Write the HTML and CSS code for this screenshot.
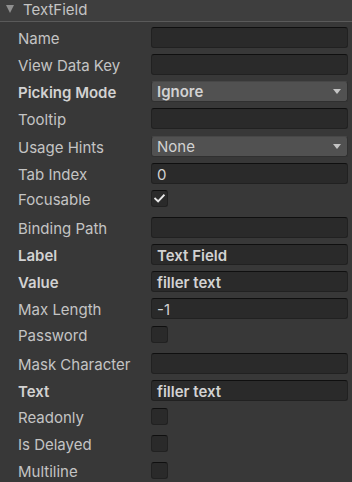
FILE: index.html
```html
<!DOCTYPE html>
<html lang="en">
<head>
    <meta charset="UTF-8">
    <title>TextField Inspector</title>
    <link rel="stylesheet" href="styles.css">
</head>
<body>
    <div class="inspector">
        <div class="foldout">
            <span class="arrow"></span>
            <span class="title">TextField</span>
        </div>
        <div class="props">
            <div class="row"><span class="label">Name</span><div class="field"></div></div>
            <div class="row"><span class="label">View Data Key</span><div class="field"></div></div>
            <div class="row"><span class="label bold">Picking Mode</span><div class="dropdown bold">Ignore<span class="caret"></span></div></div>
            <div class="row"><span class="label">Tooltip</span><div class="field"></div></div>
            <div class="row"><span class="label">Usage Hints</span><div class="dropdown">None<span class="caret"></span></div></div>
            <div class="row"><span class="label">Tab Index</span><div class="field">0</div></div>
            <div class="row check-row"><span class="label">Focusable</span>
                <div class="toggle">
                    <svg width="11" height="9" viewBox="0 0 11 9"><path d="M1.2 4.6 L4.1 7.3 L9.8 1.4" fill="none" stroke="#e8e8e8" stroke-width="1.9" stroke-linecap="square"/></svg>
                </div>
            </div>
            <div class="row"><span class="label">Binding Path</span><div class="field"></div></div>
            <div class="row"><span class="label bold">Label</span><div class="field bold">Text Field</div></div>
            <div class="row"><span class="label bold">Value</span><div class="field bold">filler text</div></div>
            <div class="row"><span class="label">Max Length</span><div class="field">-1</div></div>
            <div class="row check-row"><span class="label">Password</span><div class="toggle"></div></div>
            <div class="row"><span class="label">Mask Character</span><div class="field"></div></div>
            <div class="row"><span class="label bold">Text</span><div class="field bold">filler text</div></div>
            <div class="row check-row"><span class="label">Readonly</span><div class="toggle"></div></div>
            <div class="row check-row"><span class="label">Is Delayed</span><div class="toggle"></div></div>
            <div class="row check-row"><span class="label">Multiline</span><div class="toggle"></div></div>
        </div>
    </div>
</body>
</html>
```

FILE: styles.css
```css
body {
    margin: 0;
    background: #383838;
    font-family: Inter, "Noto Sans", sans-serif;
    color: #c4c4c4;
}

.inspector {
    width: 352px;
}

.foldout {
    height: 21px;
    background: #3e3e3e;
    border-bottom: 1px solid #5a5a5a;
    display: flex;
    align-items: center;
    padding-left: 6px;
    padding-bottom: 2px;
    box-sizing: border-box;
    height: 22px;
}

.arrow {
    width: 0;
    height: 0;
    border-left: 4.5px solid transparent;
    border-right: 4.5px solid transparent;
    border-top: 8px solid #8f8f8f;
    margin-right: 9px;
    margin-top: -1px;
}

.title {
    font-size: 15px;
    color: #c4c4c4;
}

.props {
    padding-top: 2px;
}

.row {
    height: 27.15px;
    display: flex;
    align-items: center;
    padding-left: 18px;
    padding-right: 4px;
}

.check-row {
    padding-bottom: 3px;
    box-sizing: border-box;
}

.label {
    width: 133px;
    font-size: 15px;
    padding-top: 2px;
    white-space: nowrap;
}

.bold {
    font-weight: 600;
    color: #d2d2d2;
}

.field {
    flex: 1;
    height: 19px;
    background: #2a2a2a;
    border: 1px solid #212121;
    border-top-color: #0f0f0f;
    border-radius: 3px;
    padding-left: 5px;
    font-size: 15px;
    line-height: 21px;
    color: #d2d2d2;
}

.dropdown {
    flex: 1;
    height: 19px;
    background: #515151;
    border: 1px solid #303030;
    border-top-color: #474747;
    border-radius: 3px;
    padding-left: 5px;
    font-size: 15px;
    line-height: 21px;
    color: #d2d2d2;
    display: flex;
    justify-content: space-between;
    align-items: center;
}

.caret {
    width: 0;
    height: 0;
    border-left: 4.5px solid transparent;
    border-right: 4.5px solid transparent;
    border-top: 5.5px solid #c4c4c4;
    margin-right: 6px;
}

.toggle {
    width: 15px;
    height: 15px;
    background: #2a2a2a;
    border: 1px solid #212121;
    border-top-color: #0f0f0f;
    border-radius: 3px;
    display: flex;
    align-items: center;
    justify-content: center;
}
```
